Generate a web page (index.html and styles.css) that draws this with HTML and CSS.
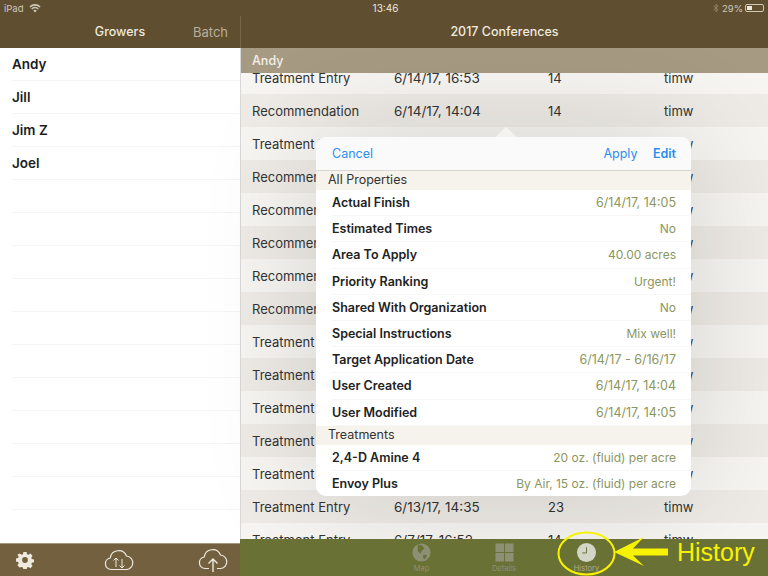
FILE: index.html
```html
<!DOCTYPE html>
<html lang="en">
<head>
    <meta charset="UTF-8">
    <title>2017 Conferences</title>
    <link rel="stylesheet" href="styles.css">
</head>
<body>
    <div class="app">
        <div class="top_bar">
            <div class="status">
                <div class="status_left">iPad
                    <svg width="12" height="9" viewBox="0 0 12 9"><path d="M6 8.600 4.200 6.500a2.600 2.600 0 0 1 3.600 0zM3.200 5.500 2.200 4.400a5.400 5.400 0 0 1 7.600 0l-1 1.100a4 4 0 0 0-5.600 0zM1.400 3.500.4 2.400a8 8 0 0 1 11.200 0l-1 1.100a6.600 6.600 0 0 0-9.200 0z" fill="#cfc8b8"/></svg>
                </div>
                <div class="status_time">13:46</div>
                <div class="status_right">
                    <svg width="6" height="10" viewBox="0 0 6 10"><path d="M.5 2.800 5 6.800 3 8.800V1.200l2 2-4.500 4" fill="none" stroke="#8f8369" stroke-width="1"/></svg>
                    <span>29%</span>
                    <span class="battery"><span class="battery_fill"></span></span>
                </div>
            </div>
            <div class="nav">
                <div class="nav_left">
                    <span class="nav_title">Growers</span>
                    <span class="nav_batch">Batch</span>
                </div>
                <div class="nav_right">2017 Conferences</div>
            </div>
        </div>

        <div class="content">
            <div class="growers">
                <div class="grower">Andy</div>
                <div class="grower">Jill</div>
                <div class="grower">Jim Z</div>
                <div class="grower">Joel</div>
                <div class="grower"></div>
                <div class="grower"></div>
                <div class="grower"></div>
                <div class="grower"></div>
                <div class="grower"></div>
                <div class="grower"></div>
                <div class="grower"></div>
                <div class="grower"></div>
                <div class="grower"></div>
                <div class="grower"></div>
            </div>
            <div class="history">
                <div class="section_head">Andy</div>
                <div class="rows">
                    <div class="row"><span>Treatment Entry</span><span>6/14/17, 16:53</span><span>14</span><span>timw</span></div>
                    <div class="row"><span>Recommendation</span><span>6/14/17, 14:04</span><span>14</span><span>timw</span></div>
                    <div class="row"><span>Treatment Entry</span><span>6/14/17, 14:01</span><span>14</span><span>timw</span></div>
                    <div class="row"><span>Recommendation</span><span>6/14/17, 13:58</span><span>14</span><span>timw</span></div>
                    <div class="row"><span>Recommendation</span><span>6/14/17, 13:40</span><span>14</span><span>timw</span></div>
                    <div class="row"><span>Recommendation</span><span>6/14/17, 13:22</span><span>14</span><span>timw</span></div>
                    <div class="row"><span>Recommendation</span><span>6/14/17, 13:10</span><span>14</span><span>timw</span></div>
                    <div class="row"><span>Recommendation</span><span>6/14/17, 12:55</span><span>14</span><span>timw</span></div>
                    <div class="row"><span>Treatment Entry</span><span>6/14/17, 11:30</span><span>14</span><span>timw</span></div>
                    <div class="row"><span>Treatment Entry</span><span>6/14/17, 11:02</span><span>14</span><span>timw</span></div>
                    <div class="row"><span>Treatment Entry</span><span>6/13/17, 16:20</span><span>23</span><span>timw</span></div>
                    <div class="row"><span>Treatment Entry</span><span>6/13/17, 15:48</span><span>23</span><span>timw</span></div>
                    <div class="row"><span>Treatment Entry</span><span>6/13/17, 15:02</span><span>23</span><span>timw</span></div>
                    <div class="row"><span>Treatment Entry</span><span>6/13/17, 14:35</span><span>23</span><span>timw</span></div>
                    <div class="row"><span>Treatment Entry</span><span>6/7/17, 16:52</span><span>14</span><span>timw</span></div>
                </div>
            </div>
        </div>

        <div class="bottom_bar">
            <div class="toolbar">
                <svg class="gear" width="18" height="18" viewBox="0 0 20 20"><path fill-rule="evenodd" fill="#efeae0" d="M8.200 1h3.600l.5 2.500 1.500.7 2.200-1.400 2.400 2.400-1.400 2.200.6 1.500 2.400.5v3.200l-2.400.5-.6 1.500 1.400 2.200-2.400 2.400-2.200-1.400-1.500.6-.5 2.500H8.200l-.5-2.500-1.500-.6L4 18.200l-2.400-2.400L3 13.600l-.6-1.500L0 11.600V8.400l2.400-.5.600-1.500-1.400-2.200L4 2.800l2.200 1.400 1.500-.7zM10 6.800a3.200 3.200 0 1 0 0 6.400 3.200 3.200 0 0 0 0-6.400z"/></svg>
                <svg width="30" height="22" viewBox="0 0 30 22"><path d="M8 20.500H7a5.800 5.800 0 0 1-.8-11.500 8.500 8.500 0 0 1 16.300-2 6.800 6.800 0 0 1 .5 13.500z" fill="none" stroke="#efeae0" stroke-width="1.200"/><path d="M12 18V9M9.500 11.500 12 9l2.500 2.500M18 10v9M15.500 16.500 18 19l2.500-2.500" fill="none" stroke="#efeae0" stroke-width="1"/></svg>
                <svg width="30" height="24" viewBox="0 0 30 24"><path d="M11 20.500H7a5.800 5.800 0 0 1-.8-11.500 8.500 8.500 0 0 1 16.300-2 6.800 6.800 0 0 1 .5 13.500H19" fill="none" stroke="#efeae0" stroke-width="1.200"/><path d="M15 24V11M10.500 15.500 15 11l4.500 4.500" fill="none" stroke="#efeae0" stroke-width="1.400"/></svg>
            </div>
            <div class="tabs">
                <div class="tab">
                    <svg width="19" height="19" viewBox="0 0 20 20"><circle cx="10" cy="10" r="9.500" fill="#8d9075"/><path d="M6 1.500 11 3l2 3-3 2.500-1 3-3-3zM12 12l4 1-2.500 4-2-1.500z" fill="#6a7135"/></svg>
                    <span>Map</span>
                </div>
                <div class="tab">
                    <svg width="19" height="19" viewBox="0 0 20 20"><path d="M.5.500h9v9h-9zM10.500.500h9v9h-9zM.5 10.500h9v9h-9zM10.500 10.500h9v9h-9z" fill="#8d9075"/></svg>
                    <span>Details</span>
                </div>
                <div class="tab">
                    <svg width="19" height="19" viewBox="0 0 20 20"><circle cx="10" cy="10" r="10" fill="#d3d5c6"/><path d="M10 4.500V10.500H5.500" fill="none" stroke="#6a7135" stroke-width="1"/></svg>
                    <span>History</span>
                </div>
            </div>
        </div>

        <div class="popover">
            <div class="pop_arrow"></div>
            <div class="pop_head">
                <span class="pop_link">Cancel</span>
                <span class="pop_actions">
                    <span class="pop_link">Apply</span>
                    <span class="pop_link pop_edit">Edit</span>
                </span>
            </div>
            <div class="pop_section">All Properties</div>
            <div class="pop_row"><b>Actual Finish</b><span class="pop_date">6/14/17, 14:05</span></div>
            <div class="pop_row"><b>Estimated Times</b><span>No</span></div>
            <div class="pop_row"><b>Area To Apply</b><span>40.00 acres</span></div>
            <div class="pop_row"><b>Priority Ranking</b><span>Urgent!</span></div>
            <div class="pop_row"><b>Shared With Organization</b><span>No</span></div>
            <div class="pop_row"><b>Special Instructions</b><span>Mix well!</span></div>
            <div class="pop_row"><b>Target Application Date</b><span class="pop_date">6/14/17 - 6/16/17</span></div>
            <div class="pop_row"><b>User Created</b><span class="pop_date">6/14/17, 14:04</span></div>
            <div class="pop_row"><b>User Modified</b><span class="pop_date">6/14/17, 14:05</span></div>
            <div class="pop_section">Treatments</div>
            <div class="pop_row"><b>2,4-D Amine 4</b><span>20 oz. (fluid) per acre</span></div>
            <div class="pop_row"><b>Envoy Plus</b><span>By Air, 15 oz. (fluid) per acre</span></div>
        </div>

        <!-- yellow note drawn over the tab bar -->
        <div class="note">
            <svg class="note_marks" width="112" height="48" viewBox="0 0 112 48"><ellipse cx="30.500" cy="25.500" rx="28" ry="21" fill="none" stroke="#f7f300" stroke-width="2"/><path d="M58 24 88 9 77 20.500H112V27.500H77L88 38z" fill="#f7f300"/></svg>
            <span class="note_text">History</span>
        </div>
    </div>
</body>
</html>
```

FILE: styles.css
```css
* {
    box-sizing: border-box;
}
html, body {
    margin: 0;
    height: 100%;
}
body {
    font-family: "Inter", "Liberation Sans", sans-serif;
    color: #333;
    overflow: hidden;
}
.app {
    position: relative;
    width: 768px;
    height: 576px;
    display: flex;
    flex-direction: column;
    overflow: hidden;
    background: #fff;
}

/* top */
.top_bar {
    position: relative;
    z-index: 2;
    height: 48px;
    background: #604e31;
    color: #eee9df;
}
.status {
    height: 16px;
    display: grid;
    grid-template-columns: 1fr 1fr 1fr;
    align-items: center;
    padding: 0 4px;
    font-size: 9.500px;
    color: #cfc8b8;
}
.status_left {
    display: flex;
    align-items: center;
    gap: 5px;
}
.status_time {
    text-align: center;
    font-size: 10px;
    color: #eee9df;
    padding-left: 3px;
}
.status_right {
    display: flex;
    justify-content: flex-end;
    align-items: center;
    gap: 2px;
}
.status_right svg {
    margin-right: 1px;
}
.battery {
    width: 19px;
    height: 8px;
    border: 1px solid #cfc8b8;
    border-radius: 2px;
    padding: 1px;
}
.battery_fill {
    display: block;
    width: 5px;
    height: 100%;
    background: #eee9df;
}
.nav {
    height: 32px;
    display: flex;
    font-size: 12.500px;
    font-weight: 500;
}
.nav_left {
    width: 241px;
    border-right: 1px solid #75664c;
    position: relative;
    text-align: center;
    line-height: 31px;
}
.nav_batch {
    position: absolute;
    right: 12px;
    top: 1px;
    font-size: 13px;
    font-weight: 400;
    color: #b9af9c;
}
.nav_right {
    flex: 1;
    text-align: center;
    line-height: 31px;
}

/* middle */
.content {
    flex: 1;
    display: flex;
    min-height: 0;
}
.growers {
    width: 241px;
    border-right: 1px solid #d8d8d6;
    overflow: hidden;
}
.grower {
    height: 33px;
    margin-left: 12px;
    line-height: 32px;
    font-size: 13.500px;
    font-weight: 600;
    color: #1c1c1c;
    border-bottom: 1px solid #f7f5f1;
}
.history {
    flex: 1;
    min-width: 0;
    display: flex;
    flex-direction: column;
    overflow: hidden;
}
.section_head {
    position: relative;
    height: 25px;
    padding: 1px 0 0 11px;
    line-height: 24px;
    font-size: 12.500px;
    font-weight: 500;
    color: #f4f1ea;
    background: #a79a83;
}
.rows {
    margin-top: -12px;
}
.row {
    height: 33px;
    display: grid;
    grid-template-columns: 142px 154px 116px 1fr;
    align-items: center;
    padding-left: 11px;
    font-size: 13px;
    color: #333;
    background: #f6f5f2;
}
.row:nth-child(even) {
    background: #eeebe6;
}
.row span:nth-child(2) {
    font-size: 13.500px;
}

/* bottom */
.bottom_bar {
    position: relative;
    z-index: 2;
    height: 33px;
    display: flex;
}
.toolbar {
    width: 240px;
    display: flex;
    align-items: center;
    gap: 64px;
    padding-left: 10px;
    background: #72603f;
    border-top: 1px solid #a79a83;
}
.gear {
    margin: 0 6px;
}
.tabs {
    flex: 1;
    height: 37px;
    margin-top: -4px;
    display: flex;
    justify-content: center;
    background: #6a7135;
}
.tab {
    width: 82.500px;
    padding-top: 4px;
    display: flex;
    flex-direction: column;
    align-items: center;
    gap: 2px;
    font-size: 7.500px;
    color: #8d9075;
}
.tab:last-child {
    color: #a9ac92;
}

/* popover */
.popover {
    position: absolute;
    z-index: 1;
    left: 316px;
    top: 137px;
    width: 375px;
    height: 359px;
    background: #fff;
    border-radius: 10px;
    box-shadow: 0 0 120px rgba(0,0,0,.14);
}
.pop_arrow {
    position: absolute;
    left: 179px;
    top: -10px;
    border-left: 11px solid transparent;
    border-right: 11px solid transparent;
    border-bottom: 10px solid #f4f3f0;
}
.pop_head {
    height: 34px;
    display: flex;
    justify-content: space-between;
    align-items: center;
    padding: 0 15px 0 16px;
    font-size: 12.500px;
    background: #fafafa;
    border-bottom: 1px solid #d9d8d5;
    border-radius: 10px 10px 0 0;
}
.pop_link {
    color: #2a8ef5;
}
.pop_edit {
    font-weight: 600;
    margin-left: 12px;
}
.pop_section {
    height: 19px;
    padding-left: 12px;
    line-height: 18px;
    font-size: 12.500px;
    color: #333;
    background: #f6f3ec;
}
.pop_row {
    height: 26.200px;
    margin-left: 16px;
    padding-right: 15px;
    display: flex;
    justify-content: space-between;
    align-items: center;
    font-size: 12px;
    border-bottom: 1px solid #f8f7f4;
}
.pop_row:last-child {
    border-bottom: 0;
}
.pop_row b {
    font-size: 12.500px;
    font-weight: 600;
    color: #222;
}
.pop_row span {
    color: #8b9660;
}
.pop_row .pop_date {
    font-size: 12.500px;
}

/* note */
.note {
    position: absolute;
    z-index: 3;
    left: 556px;
    top: 528px;
    display: flex;
    align-items: center;
    gap: 9px;
    color: #f7f300;
}
.note_marks {
    display: block;
}
.note_text {
    font-family: "Liberation Sans", sans-serif;
    font-size: 25px;
}
```
